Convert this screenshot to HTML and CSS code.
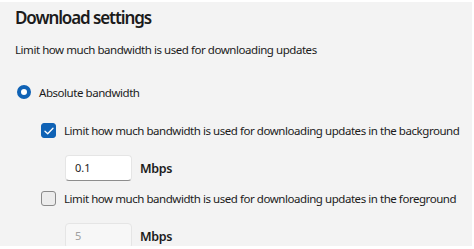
FILE: index.html
```html
<!DOCTYPE html>
<html>
<head>
<meta charset="utf-8">
<link rel="stylesheet" href="styles.css">
</head>
<body>
<div class="page">
  <h1 class="title">Download settings</h1>
  <p class="desc">Limit how much bandwidth is used for downloading updates</p>
  <div class="radio-row">
    <span class="radio"></span>
    <span class="label">Absolute bandwidth</span>
  </div>
  <div class="check-row first">
    <span class="check checked">
      <svg width="10" height="8" viewBox="0 0 10 8"><path d="M1 4.2 L3.7 6.8 L9 1.2" fill="none" stroke="#fff" stroke-width="1.3" stroke-linecap="round" stroke-linejoin="round"/></svg>
    </span>
    <span class="label">Limit how much bandwidth is used for downloading updates in the background</span>
  </div>
  <div class="input-row">
    <div class="input">0.1</div>
    <span class="unit">Mbps</span>
  </div>
  <div class="check-row second">
    <span class="check"></span>
    <span class="label">Limit how much bandwidth is used for downloading updates in the foreground</span>
  </div>
  <div class="input-row">
    <div class="input disabled">5</div>
    <span class="unit">Mbps</span>
  </div>
</div>
</body>
</html>
```
FILE: styles.css
```css
html, body {
  margin: 0;
  padding: 0;
  background: #ffffff;
}
body {
  width: 474px;
  height: 249px;
  overflow: hidden;
  font-family: "Noto Sans", "Open Sans", sans-serif;
  color: #1b1b1b;
}
.page {
  margin-top: 2px;
  width: 472px;
  height: 244px;
  background: #f3f3f3;
  overflow: hidden;
  box-sizing: border-box;
  padding-left: 15px;
}
.title {
  margin: 0;
  padding-top: 3px;
  font-size: 17px;
  font-weight: 600;
  line-height: 26px;
  letter-spacing: -1.1px;
}
.desc {
  margin: 11px 0 0 0;
  font-size: 11.5px;
  line-height: 16px;
  letter-spacing: -0.45px;
  white-space: nowrap;
}
.radio-row {
  display: flex;
  align-items: center;
  margin-top: 25px;
  margin-left: 2px;
  height: 18px;
  font-size: 11.5px;
  letter-spacing: -0.45px;
}
.radio {
  flex: none;
  width: 14px;
  height: 14px;
  box-sizing: border-box;
  border-radius: 50%;
  border: 4px solid #0f62b5;
  background: #fff;
  margin-right: 8px;
}
.check-row {
  display: flex;
  align-items: center;
  margin-left: 26px;
  height: 18px;
  font-size: 11.5px;
  letter-spacing: -0.45px;
  white-space: nowrap;
}
.check-row.first { margin-top: 20.5px; }
.check-row.second { margin-top: 8.5px; }
.check {
  flex: none;
  width: 15px;
  height: 15px;
  box-sizing: border-box;
  border-radius: 3px;
  border: 1px solid #8a8a8a;
  background: #ececec;
  margin-right: 8px;
  display: flex;
  align-items: center;
  justify-content: center;
}
.check.checked {
  background: #0f62b5;
  border-color: #0f62b5;
}
.input-row {
  display: flex;
  align-items: center;
  margin-left: 50px;
  margin-top: 15.5px;
}
.input {
  width: 67px;
  height: 26px;
  box-sizing: border-box;
  background: #fff;
  border: 1px solid #e5e5e5;
  border-bottom: 1px solid #8d8d8d;
  border-radius: 4px;
  font-size: 11px;
  line-height: 24px;
  padding-left: 9px;
  color: #1b1b1b;
}
.input.disabled {
  background: #f7f7f7;
  border-bottom-color: #e5e5e5;
  color: #a0a0a0;
}
.unit {
  margin-left: 8px;
  font-size: 12.5px;
  font-weight: 600;
  letter-spacing: -0.3px;
}
```
